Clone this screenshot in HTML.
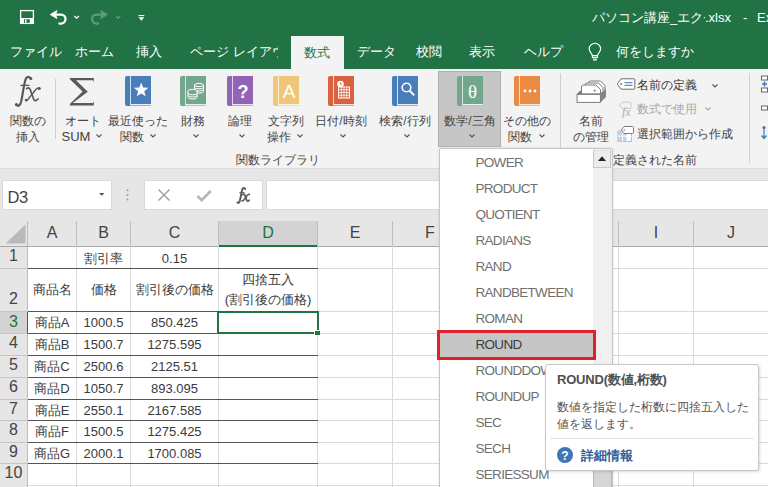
<!DOCTYPE html>
<html><head><meta charset="utf-8">
<style>
*{margin:0;padding:0;box-sizing:border-box}
html,body{width:768px;height:487px;overflow:hidden;background:#fff;font-family:"Liberation Sans",sans-serif;}
.a{position:absolute}
#title{left:0;top:0;width:768px;height:69px;background:#217346}
.tab{position:absolute;top:44px;font-size:13px;color:#fff;line-height:16px;white-space:nowrap}
#ribbon{left:0;top:69px;width:768px;height:100px;background:#f3f3f3;border-bottom:1px solid #dcdcdc}
.rt{position:absolute;width:100px;font-size:12px;color:#444;line-height:16px;white-space:nowrap;text-align:center}
.rl{position:absolute;font-size:12px;color:#444;line-height:16px;white-space:nowrap}
.ch{position:absolute}
#fbar{left:0;top:169px;width:768px;height:52px;background:#e6e6e6}
.hdr{position:absolute;top:221px;height:26px;background:#e6e6e6;border-right:1px solid #bdbdbd;border-bottom:1px solid #a9a9a9;font-size:16px;color:#444;text-align:center;line-height:24px}
.rh{position:absolute;left:0;width:28px;background:#e6e6e6;border-right:1px solid #bdbdbd;border-bottom:1px solid #c6c6c6}
.rn{position:absolute;left:0;width:27px;font-size:16px;color:#444;text-align:center;line-height:18px}
.vl{position:absolute;top:246px;width:1px;height:241px;background:#dadada}
.hl{position:absolute;left:28px;height:1px;width:740px;background:#dadada}
.bl{position:absolute;left:28px;height:1px;width:290px;background:#555}
.c{position:absolute;font-size:13px;color:#3a3a3a;text-align:center;white-space:nowrap;line-height:22px}
.dd{position:absolute;left:475.5px;font-size:13.5px;color:#707070;line-height:16px;letter-spacing:-0.7px}
</style></head><body>
<div id="title" class="a"></div>
<!-- QAT -->
<svg class="a" style="left:0;top:0" width="160" height="36">
  <rect x="20.6" y="10.6" width="12.8" height="12.8" fill="none" stroke="#fff" stroke-width="1.3"/>
  <rect x="20" y="18" width="14" height="6" fill="#fff"/>
  <rect x="24" y="19.3" width="5.7" height="3.6" fill="#217346"/>
  <rect x="25" y="19.6" width="1.5" height="3.3" fill="#fff"/>
  <path d="M50.2 14.6L56.9 10.6L55.6 14.6L56.9 18.6Z" fill="#fff" stroke="#fff" stroke-width=".8" stroke-linejoin="round"/>
  <path d="M55 14.6H61A4.5 4.5 0 0 1 61 23.6H59.4" stroke="#fff" stroke-width="2.3" fill="none" stroke-linecap="round"/>
  <path d="M74.3 16l2.3 2.2 2.3-2.2" stroke="#fff" stroke-width="1.2" fill="none"/>
  <g transform="translate(157.6,0) scale(-1,1)">
  <path d="M50.2 14.6L56.9 10.6L55.6 14.6L56.9 18.6Z" fill="#5f9c7b" stroke="#5f9c7b" stroke-width=".8" stroke-linejoin="round"/>
  <path d="M55 14.6H61A4.5 4.5 0 0 1 61 23.6H59.4" stroke="#5f9c7b" stroke-width="2.3" fill="none" stroke-linecap="round"/>
  </g>
  <path d="M115.8 16l2.3 2.2 2.3-2.2" stroke="#5f9c7b" stroke-width="1.1" fill="none"/>
  <rect x="138.5" y="15" width="5.8" height="1.1" fill="#fff"/>
  <path d="M138.5 17.2h5.8l-2.9 3.6z" fill="#fff"/>
</svg>
<div class="a" style="left:592px;top:10px;width:113px;overflow:hidden;font-size:13px;color:#fff;white-space:nowrap;line-height:16px">パソコン講座_エクセル</div><div class="a" style="left:705px;top:10px;font-size:13px;color:#fff;white-space:nowrap;line-height:16px">.xlsx</div><div class="a" style="left:743px;top:10px;font-size:13px;color:#fff;white-space:nowrap;line-height:16px">-</div><div class="a" style="left:757px;top:10px;font-size:13px;color:#fff;white-space:nowrap;line-height:16px">Excel</div>
<div class="tab" style="left:10px">ファイル</div>
<div class="tab" style="left:75px">ホーム</div>
<div class="tab" style="left:136px">挿入</div>
<div class="tab" style="left:190px;width:88px;overflow:hidden">ページ レイアウト</div>
<div class="a" style="left:291px;top:36px;width:53px;height:34px;background:#f3f3f3"></div>
<div class="tab" style="left:304px;top:45px;color:#217346">数式</div>
<div class="tab" style="left:357px">データ</div>
<div class="tab" style="left:416px">校閲</div>
<div class="tab" style="left:469px">表示</div>
<div class="tab" style="left:524px">ヘルプ</div>
<svg class="a" style="left:586px;top:42px" width="20" height="20"><path d="M6.3 13.6C6.3 11.6 3.2 10.2 3.2 6.9A5.7 5.7 0 0 1 14.6 6.9C14.6 10.2 11.5 11.6 11.5 13.6z" stroke="#fff" stroke-width="1.15" fill="none"/><rect x="6.4" y="13.6" width="5" height="2" fill="none" stroke="#fff" stroke-width="1"/><rect x="7" y="16.6" width="3.8" height="2" fill="#d8e8de"/></svg>
<div class="tab" style="left:616px">何をしますか</div>

<div id="ribbon" class="a"></div>
<!-- fx -->
<svg class="a" style="left:0;top:70px" width="50" height="40">
  <g fill="none" stroke="#595959" stroke-linecap="round">
    <path d="M30.6 8.6C29.6 6.4 27.4 6.2 26 8.4C24.2 11.5 23 23 21.2 31.5C20.2 35.6 18.4 36.8 16.4 34.8" stroke-width="2.2"/>
    <path d="M20.8 15.3H29" stroke-width="1.3"/>
    <path d="M26.6 18.6C28.3 17.2 29.6 18 30.6 20.6L33.4 28.4C34.3 31.2 35.8 31.6 38.2 28.8" stroke-width="1.7"/>
    <path d="M39.6 18.4C38.4 17.6 37.2 18.2 35.6 19.8L28.6 28.6C27.6 30 26.4 30.6 25.6 30" stroke-width="1.5"/>
  </g>
  <g fill="#595959"><circle cx="30.9" cy="8.4" r="1.5"/><circle cx="16.4" cy="34.4" r="1.5"/><circle cx="39.3" cy="18.6" r="1.5"/><circle cx="26.2" cy="30.2" r="1.3"/></g>
</svg>
<div class="rt" style="left:-22px;top:113px">関数の</div>
<div class="rt" style="left:-22px;top:129px">挿入</div>
<div class="a" style="left:55px;top:79px;width:1px;height:60px;background:#cfcfcf"></div>
<!-- sigma -->
<svg class="a" style="left:60px;top:72px" width="40" height="40"><path d="M9.9 5.9H33.8V10.3L33 8.2H16L27.8 19.7L12.8 31H33L33.8 28.7V33.5H9.9V32L22.6 19.6L9.9 7.3Z" fill="#5a5a5a"/></svg>
<div class="rt" style="left:33px;top:113px">オート</div>
<div class="rt" style="left:26px;top:129px;font-size:13px;color:#444">SUM</div>
<svg class="ch" style="left:96px;top:134px" width="6" height="4"><path d="M.5 .5L3 3 5.5 .5" stroke="#555" stroke-width="1.1" fill="none"/></svg>

<!-- books -->
<svg class="a" style="left:125px;top:76px" width="27" height="31">
  <path d="M2 0H26V30H2Q0 30 0 28V2Q0 0 2 0Z" fill="#4a7ebb"/>
  <rect x="5" y="0" width="1" height="28.5" fill="#cfe0f2"/>
  <rect x="5" y="28" width="21" height="1" fill="#e6eef8"/>
  <rect x="5" y="29" width="21" height="1" fill="#8fb2de"/>
  <path d="M16.20 6.60 L18.08 11.62 L23.43 11.85 L19.24 15.19 L20.67 20.35 L16.20 17.39 L11.73 20.35 L13.16 15.19 L8.97 11.85 L14.32 11.62z" fill="#fff"/>
</svg>
<div class="rt" style="left:88px;top:113px">最近使った</div>
<div class="rl" style="left:120px;top:129px">関数</div>
<svg class="ch" style="left:150px;top:134px" width="6" height="4"><path d="M.5 .5L3 3 5.5 .5" stroke="#555" stroke-width="1.1" fill="none"/></svg>

<svg class="a" style="left:180px;top:76px" width="27" height="31">
  <path d="M2 0H26V30H2Q0 30 0 28V2Q0 0 2 0Z" fill="#72a78e"/>
  <rect x="5" y="0" width="1" height="28.5" fill="#d4e6dc"/>
  <rect x="5" y="28" width="21" height="1" fill="#e8f1ec"/>
  <rect x="5" y="29" width="21" height="1" fill="#a9cbb9"/>
  <g fill="none" stroke="#fff" stroke-width="1">
    <ellipse cx="19" cy="9" rx="4.5" ry="1.6"/>
    <path d="M14.5 9v6.5a4.5 1.6 0 0 0 9 0V9 M14.5 11.2a4.5 1.6 0 0 0 9 0 M14.5 13.4a4.5 1.6 0 0 0 9 0"/>
    <ellipse cx="12.5" cy="15" rx="4.5" ry="1.6" fill="#72a78e"/>
    <path d="M8 15v6.5a4.5 1.6 0 0 0 9 0V15 M8 17.2a4.5 1.6 0 0 0 9 0 M8 19.4a4.5 1.6 0 0 0 9 0" fill="#72a78e"/>
  </g>
</svg>
<div class="rt" style="left:143px;top:113px">財務</div>
<svg class="ch" style="left:193px;top:134px" width="6" height="4"><path d="M.5 .5L3 3 5.5 .5" stroke="#555" stroke-width="1.1" fill="none"/></svg>

<svg class="a" style="left:227px;top:76px" width="27" height="31">
  <path d="M2 0H26V30H2Q0 30 0 28V2Q0 0 2 0Z" fill="#9263b6"/>
  <rect x="5" y="0" width="1" height="28.5" fill="#e2d3ee"/>
  <rect x="5" y="28" width="21" height="1" fill="#efe6f6"/>
  <rect x="5" y="29" width="21" height="1" fill="#c0a2d8"/>
  <text x="16" y="21.5" font-family="Liberation Sans" font-weight="bold" font-size="18" fill="#fff" text-anchor="middle">?</text>
</svg>
<div class="rt" style="left:190px;top:113px">論理</div>
<svg class="ch" style="left:239px;top:134px" width="6" height="4"><path d="M.5 .5L3 3 5.5 .5" stroke="#555" stroke-width="1.1" fill="none"/></svg>

<svg class="a" style="left:273px;top:76px" width="27" height="31">
  <path d="M2 0H26V30H2Q0 30 0 28V2Q0 0 2 0Z" fill="#efc77b"/>
  <rect x="5" y="0" width="1" height="28.5" fill="#fbeed5"/>
  <rect x="5" y="28" width="21" height="1" fill="#fcf3e2"/>
  <rect x="5" y="29" width="21" height="1" fill="#f5dba9"/>
  <text x="16" y="22" font-family="Liberation Sans" font-size="19" fill="#fff" text-anchor="middle">A</text>
</svg>
<div class="rt" style="left:236px;top:113px">文字列</div>
<div class="rl" style="left:267px;top:129px">操作</div>
<svg class="ch" style="left:297px;top:134px" width="6" height="4"><path d="M.5 .5L3 3 5.5 .5" stroke="#555" stroke-width="1.1" fill="none"/></svg>

<svg class="a" style="left:328px;top:76px" width="27" height="31">
  <path d="M2 0H26V30H2Q0 30 0 28V2Q0 0 2 0Z" fill="#d9613f"/>
  <rect x="5" y="0" width="1" height="28.5" fill="#f4d2c7"/>
  <rect x="5" y="28" width="21" height="1" fill="#f8e4dd"/>
  <rect x="5" y="29" width="21" height="1" fill="#eaa28d"/>
  <rect x="10.5" y="11" width="11" height="11" fill="none" stroke="#fff" stroke-width="1"/>
  <path d="M13.25 11v11 M16 11v11 M18.75 11v11 M10.5 13.75h11 M10.5 16.5h11 M10.5 19.25h11" stroke="#fff" stroke-width=".8"/>
  <circle cx="12.5" cy="8" r="3.3" fill="#fff"/>
  <path d="M12.5 6v2.2h1.6" stroke="#d9613f" stroke-width=".8" fill="none"/>
</svg>
<div class="rt" style="left:291px;top:113px">日付/時刻</div>
<svg class="ch" style="left:340px;top:134px" width="6" height="4"><path d="M.5 .5L3 3 5.5 .5" stroke="#555" stroke-width="1.1" fill="none"/></svg>

<svg class="a" style="left:392px;top:76px" width="27" height="31">
  <path d="M2 0H26V30H2Q0 30 0 28V2Q0 0 2 0Z" fill="#4a7ebb"/>
  <rect x="5" y="0" width="1" height="28.5" fill="#cfe0f2"/>
  <rect x="5" y="28" width="21" height="1" fill="#e6eef8"/>
  <rect x="5" y="29" width="21" height="1" fill="#8fb2de"/>
  <circle cx="14.5" cy="11.5" r="4.3" fill="none" stroke="#fff" stroke-width="1.6"/>
  <path d="M17.6 14.6l4.6 4.6" stroke="#fff" stroke-width="2"/>
</svg>
<div class="rt" style="left:355px;top:113px">検索/行列</div>
<svg class="ch" style="left:404px;top:134px" width="6" height="4"><path d="M.5 .5L3 3 5.5 .5" stroke="#555" stroke-width="1.1" fill="none"/></svg>

<div class="a" style="left:438px;top:71px;width:63px;height:76px;background:#c6c6c6;border:1px solid #b1b1b1"></div>
<svg class="a" style="left:457px;top:76px" width="27" height="31">
  <path d="M2 0H26V30H2Q0 30 0 28V2Q0 0 2 0Z" fill="#72a78e"/>
  <rect x="5" y="0" width="1" height="28.5" fill="#d4e6dc"/>
  <rect x="5" y="28" width="21" height="1" fill="#e8f1ec"/>
  <rect x="5" y="29" width="21" height="1" fill="#a9cbb9"/>
  <text x="15.5" y="21.5" font-family="Liberation Serif" font-size="19" fill="#fff" text-anchor="middle">θ</text>
</svg>
<div class="rt" style="left:420px;top:113px">数学/三角</div>
<svg class="ch" style="left:469px;top:134px" width="6" height="4"><path d="M.5 .5L3 3 5.5 .5" stroke="#555" stroke-width="1.1" fill="none"/></svg>

<svg class="a" style="left:514px;top:76px" width="27" height="31">
  <path d="M2 0H26V30H2Q0 30 0 28V2Q0 0 2 0Z" fill="#e98b43"/>
  <rect x="5" y="0" width="1" height="28.5" fill="#f9dcc5"/>
  <rect x="5" y="28" width="21" height="1" fill="#fbe9db"/>
  <rect x="5" y="29" width="21" height="1" fill="#f2b88d"/>
  <circle cx="11" cy="15" r="1.4" fill="#fff"/><circle cx="16" cy="15" r="1.4" fill="#fff"/><circle cx="21" cy="15" r="1.4" fill="#fff"/>
</svg>
<div class="rt" style="left:477px;top:113px">その他の</div>
<div class="rl" style="left:508px;top:129px">関数</div>
<svg class="ch" style="left:539px;top:134px" width="6" height="4"><path d="M.5 .5L3 3 5.5 .5" stroke="#555" stroke-width="1.1" fill="none"/></svg>

<div class="rt" style="left:228px;top:152px">関数ライブラリ</div>
<div class="a" style="left:560px;top:73px;width:1px;height:90px;background:#cfcfcf"></div>
<!-- name mgr -->
<svg class="a" style="left:572px;top:76px" width="40" height="30">
  <g stroke="#7a7a7a" stroke-width="1" fill="#fff">
    <path d="M16.5 16V7a2 2 0 0 1 2-2h10l4.5 4.5V16z"/>
    <path d="M13 17V9a2 2 0 0 1 2-2h11.5l4.5 4.5V17z"/>
    <path d="M9.5 17.9V11a2 2 0 0 1 2-2H24l4.5 4.5v4.4z"/>
  </g>
  <circle cx="22.6" cy="14.7" r="1.1" fill="#8a8a8a"/>
  <path d="M28.4 17.9L34 12.5V21L28.4 26.5z" fill="#858585"/>
  <path d="M5 17.9L8.8 14.2V17.9z" fill="#6a6a6a"/>
  <rect x="5.1" y="18.4" width="23.3" height="8" fill="#fff" stroke="#7a7a7a" stroke-width="1"/>
</svg>
<div class="rt" style="left:541px;top:113px">名前</div>
<div class="rt" style="left:541px;top:129px">の管理</div>
<svg class="a" style="left:616px;top:78px" width="20" height="13">
  <path d="M5 .8H17.8a1 1 0 0 1 1 1V10.2a1 1 0 0 1-1 1H5L1.3 6z" fill="#fff" stroke="#6e6e6e" stroke-width="1"/>
  <circle cx="5.2" cy="6" r="1" fill="#777"/>
  <path d="M8.5 4.6h8 M8.5 7.4h8" stroke="#5b8fcf" stroke-width="1.1"/>
</svg>
<div class="rl" style="left:637px;top:77px;color:#333">名前の定義</div>
<svg class="ch" style="left:712px;top:84px" width="6" height="4"><path d="M.5 .5L3 3 5.5 .5" stroke="#555" stroke-width="1.1" fill="none"/></svg>
<svg class="a" style="left:618px;top:101px" width="16" height="17">
  <path d="M4.5 1.2h7.5a1 1 0 0 1 1 1V6.5a1 1 0 0 1-1 1H4.5L1.5 4.3z" fill="none" stroke="#c9c9c9" stroke-width="1"/>
  <text x="4" y="14.5" font-family="Liberation Serif" font-style="italic" font-size="12" fill="#b0b0b0">fx</text>
</svg>
<div class="rl" style="left:637px;top:101px;color:#a9a9a9">数式で使用</div>
<svg class="ch" style="left:705px;top:107px" width="6" height="4"><path d="M.5 .5L3 3 5.5 .5" stroke="#aaa" stroke-width="1.1" fill="none"/></svg>
<svg class="a" style="left:617px;top:125px" width="18" height="18">
  <rect x="1" y="6" width="13.5" height="10.5" fill="#fff" stroke="#aaa" stroke-width=".8"/>
  <rect x="1" y="6" width="9" height="10.5" fill="#bcd3ea"/>
  <path d="M1 11.2h13.5 M5.5 6v10.5 M10 6v10.5" stroke="#fff" stroke-width="1"/>
  <path d="M7 1.5h8.5a1 1 0 0 1 1 1V7.5a1 1 0 0 1-1 1H7L4.3 5z" fill="#fff" stroke="#6e6e6e" stroke-width=".9"/>
  <circle cx="7.2" cy="5" r=".8" fill="#777"/>
</svg>
<div class="rl" style="left:637px;top:126px">選択範囲から作成</div>
<div class="rl" style="left:613px;top:152px">定義された名前</div>
<div class="a" style="left:749px;top:73px;width:1px;height:90px;background:#cfcfcf"></div>
<svg class="a" style="left:758px;top:72px" width="10" height="72">
  <rect x="3.5" y="4" width="6" height="4" fill="#fff" stroke="#666" stroke-width="1"/>
  <path d="M6.5 9.5v5 M4 12h5" stroke="#3a78c0" stroke-width="1.4"/>
  <rect x="3.5" y="16" width="6" height="4" fill="#fff" stroke="#666" stroke-width="1"/>
  <rect x="3.5" y="34" width="6" height="4" fill="#fff" stroke="#666" stroke-width="1"/>
  <circle cx="6" cy="55.5" r="1.6" fill="#3a78c0"/>
  <path d="M6 56v10 M3.5 63.5l2.5 3 2.5-3" stroke="#3a78c0" stroke-width="1.2" fill="none"/>
</svg>

<!-- formula bar -->
<div id="fbar" class="a"></div>
<div class="a" style="left:2px;top:180px;width:110px;height:30px;background:#fff;border:1px solid #d9d9d9"></div>
<div class="a" style="left:7.5px;top:187px;font-size:16.5px;color:#444;line-height:20px;letter-spacing:-0.5px">D3</div>
<svg class="a" style="left:99px;top:193px" width="6" height="3"><path d="M0 0h5.5l-2.75 2.7z" fill="#555"/></svg>
<svg class="a" style="left:126px;top:188px" width="3" height="14"><circle cx="1.5" cy="2.2" r="1" fill="#9a9a9a"/><circle cx="1.5" cy="7" r="1" fill="#9a9a9a"/><circle cx="1.5" cy="11.6" r="1" fill="#9a9a9a"/></svg>
<div class="a" style="left:144px;top:180px;width:119px;height:30px;background:#fff;border:1px solid #d9d9d9"></div>
<svg class="a" style="left:156px;top:187px" width="60" height="17">
  <path d="M2.5 2.5l11 11 M13.5 2.5l-11 11" stroke="#a3a3a3" stroke-width="1.5"/>
  <path d="M41.5 9l4.2 4.2 9-9.2" stroke="#b5b5b5" stroke-width="2.6" fill="none"/>
</svg>
<svg class="a" style="left:230px;top:184px" width="24" height="22">
  <g fill="none" stroke="#5e5e5e" stroke-linecap="round">
    <path d="M15.2 5C14.6 3.6 13.3 3.6 12.6 4.8C11.6 6.8 10.9 12.5 9.9 16.6C9.4 18.6 8.4 19.3 7.4 18.4" stroke-width="2"/>
    <path d="M9.8 8.6H14.2" stroke-width="1"/>
    <path d="M12.8 10.5C13.8 9.8 14.6 10.2 15.1 11.6L16.6 16C17.1 17.5 18 17.7 19.2 16.2" stroke-width="1.8"/>
    <path d="M19.6 10.4C19 10 18.3 10.3 17.4 11.2L13.6 16.2C13 17 12.4 17.2 12 16.9" stroke-width="1.5"/>
  </g>
</svg>
<div class="a" style="left:266px;top:180px;width:502px;height:30px;background:#fff;border:1px solid #d9d9d9;border-right:0"></div>

<!-- grid headers -->
<div class="hdr" style="left:0;width:28px"></div>
<svg class="a" style="left:5px;top:224px" width="21" height="20"><path d="M.5 19.5H20.5V.5z" fill="#b9b9b9"/></svg>
<div class="hdr" style="left:28px;width:49px;">A</div>
<div class="hdr" style="left:77px;width:54px;">B</div>
<div class="hdr" style="left:131px;width:88px;">C</div>
<div class="hdr" style="left:219px;width:99px;background:#d3d3d3;color:#217346;border-bottom:2px solid #217346;">D</div>
<div class="hdr" style="left:318px;width:75px;">E</div>
<div class="hdr" style="left:393px;width:75px;">F</div>
<div class="hdr" style="left:468px;width:75px;">G</div>
<div class="hdr" style="left:543px;width:76px;">H</div>
<div class="hdr" style="left:619px;width:75px;">I</div>
<div class="hdr" style="left:694px;width:75px;">J</div>
<!-- row headers -->
<div class="rh" style="top:247px;height:22px;"></div>
<div class="rh" style="top:269px;height:43px;"></div>
<div class="rh" style="top:312px;height:22px;background:#d3d3d3;border-right:1px solid #217346;"></div>
<div class="rh" style="top:334px;height:22px;"></div>
<div class="rh" style="top:356px;height:22px;"></div>
<div class="rh" style="top:378px;height:22px;"></div>
<div class="rh" style="top:400px;height:21px;"></div>
<div class="rh" style="top:421px;height:22px;"></div>
<div class="rh" style="top:443px;height:21px;"></div>
<div class="rh" style="top:464px;height:30px;"></div>
<div class="rn" style="top:247.1px;">1</div>
<div class="rn" style="top:290.3px;">2</div>
<div class="rn" style="top:312.5px;color:#217346;">3</div>
<div class="rn" style="top:334.3px;">4</div>
<div class="rn" style="top:356.1px;">5</div>
<div class="rn" style="top:378.0px;">6</div>
<div class="rn" style="top:399.8px;">7</div>
<div class="rn" style="top:421.4px;">8</div>
<div class="rn" style="top:442.9px;">9</div>
<div class="rn" style="top:464.4px;">10</div>
<!-- gridlines -->
<div class="vl" style="left:76px"></div>
<div class="vl" style="left:130px"></div>
<div class="vl" style="left:218px"></div>
<div class="vl" style="left:317px"></div>
<div class="vl" style="left:392px"></div>
<div class="vl" style="left:467px"></div>
<div class="vl" style="left:542px"></div>
<div class="vl" style="left:618px"></div>
<div class="vl" style="left:693px"></div>
<div class="hl" style="top:268px"></div>
<div class="hl" style="top:311px"></div>
<div class="hl" style="top:333px"></div>
<div class="hl" style="top:355px"></div>
<div class="hl" style="top:377px"></div>
<div class="hl" style="top:399px"></div>
<div class="hl" style="top:420px"></div>
<div class="hl" style="top:442px"></div>
<div class="hl" style="top:463px"></div>
<div class="hl" style="top:485px"></div>
<!-- borders -->
<div class="bl" style="top:268px"></div>
<div class="bl" style="top:311px"></div>
<div class="bl" style="top:333px"></div>
<div class="bl" style="top:355px"></div>
<div class="bl" style="top:377px"></div>
<div class="bl" style="top:399px"></div>
<div class="bl" style="top:420px"></div>
<div class="bl" style="top:442px"></div>
<div class="bl" style="top:463px"></div>
<!-- cells -->
<div class="c" style="left:77px;top:248px;width:53px">割引率</div>
<div class="c" style="left:131px;top:248px;width:87px">0.15</div>
<div class="c" style="left:219px;top:270px;width:98px;line-height:20px">四捨五入<br>(割引後の価格)</div>
<div class="c" style="left:28px;top:279px;width:48px">商品名</div>
<div class="c" style="left:77px;top:279px;width:53px">価格</div>
<div class="c" style="left:131px;top:279px;width:87px">割引後の価格</div>
<div class="c" style="left:28px;top:312px;width:48px">商品A</div>
<div class="c" style="left:77px;top:312px;width:53px">1000.5</div>
<div class="c" style="left:131px;top:312px;width:87px">850.425</div>
<div class="c" style="left:28px;top:334px;width:48px">商品B</div>
<div class="c" style="left:77px;top:334px;width:53px">1500.7</div>
<div class="c" style="left:131px;top:334px;width:87px">1275.595</div>
<div class="c" style="left:28px;top:356px;width:48px">商品C</div>
<div class="c" style="left:77px;top:356px;width:53px">2500.6</div>
<div class="c" style="left:131px;top:356px;width:87px">2125.51</div>
<div class="c" style="left:28px;top:378px;width:48px">商品D</div>
<div class="c" style="left:77px;top:378px;width:53px">1050.7</div>
<div class="c" style="left:131px;top:378px;width:87px">893.095</div>
<div class="c" style="left:28px;top:400px;width:48px">商品E</div>
<div class="c" style="left:77px;top:400px;width:53px">2550.1</div>
<div class="c" style="left:131px;top:400px;width:87px">2167.585</div>
<div class="c" style="left:28px;top:421px;width:48px">商品F</div>
<div class="c" style="left:77px;top:421px;width:53px">1500.5</div>
<div class="c" style="left:131px;top:421px;width:87px">1275.425</div>
<div class="c" style="left:28px;top:443px;width:48px">商品G</div>
<div class="c" style="left:77px;top:443px;width:53px">2000.1</div>
<div class="c" style="left:131px;top:443px;width:87px">1700.085</div>

<!-- selection -->
<div class="a" style="left:217px;top:311px;width:102px;height:23px;border:2px solid #217346"></div>
<div class="a" style="left:314px;top:330px;width:6px;height:5px;background:#217346;border-left:1px solid #fff;border-top:1px solid #fff"></div>

<!-- dropdown -->
<div class="a" style="left:439px;top:148px;width:174px;height:345px;background:#fff;border:1px solid #c6c6c6;border-radius:2px 2px 0 0;box-shadow:0 0 2px rgba(0,0,0,.16)"></div>
<div class="a" style="left:593px;top:149px;width:19px;height:338px;background:#f0f0f0"></div>
<div class="a" style="left:593px;top:150px;width:18px;height:18px;background:#ececec;border:1px solid #c9c9c9;border-top-color:#e0e0e0"></div>
<svg class="a" style="left:596px;top:154px" width="12" height="10"><path d="M2 7h8l-4-4.8z" fill="#222"/></svg>
<div class="a" style="left:593px;top:470px;width:19px;height:20px;background:#d6d6d6;border-left:1px solid #b8b8b8;border-right:1px solid #b8b8b8;border-top:1px solid #c8c8c8"></div>
<div class="dd" style="top:155px">POWER</div>
<div class="dd" style="top:181px">PRODUCT</div>
<div class="dd" style="top:207px">QUOTIENT</div>
<div class="dd" style="top:233px">RADIANS</div>
<div class="dd" style="top:259px">RAND</div>
<div class="dd" style="top:285px">RANDBETWEEN</div>
<div class="dd" style="top:311px">ROMAN</div>
<div class="a" style="left:437px;top:330px;width:159px;height:30px;background:#c6c6c6;border:3px solid #e0202b"></div>
<div class="dd" style="top:337px;color:#3c3c3c">ROUND</div>
<div class="dd" style="top:363px">ROUNDDOWN</div>
<div class="dd" style="top:389px">ROUNDUP</div>
<div class="dd" style="top:415px">SEC</div>
<div class="dd" style="top:441px">SECH</div>
<div class="dd" style="top:467px">SERIESSUM</div>

<!-- tooltip -->
<div class="a" style="left:545px;top:364px;width:214px;height:107px;background:#fff;border:1px solid #c8c8c8;border-radius:3px;box-shadow:1px 1px 3px rgba(0,0,0,.15)"></div>
<div class="a" style="left:557px;top:372px;font-size:13px;font-weight:bold;color:#505050;line-height:16px;white-space:nowrap;letter-spacing:-0.2px">ROUND(数値,桁数)</div>
<div class="a" style="left:557px;top:399px;font-size:12px;color:#555;line-height:17px;white-space:nowrap">数値を指定した桁数に四捨五入した<br>値を返します。</div>
<div class="a" style="left:550px;top:438px;width:204px;height:1px;background:#e1e1e1"></div>
<svg class="a" style="left:557px;top:447px" width="17" height="17"><circle cx="8" cy="8" r="8" fill="#3f77b5"/><text x="8" y="13" font-size="12" font-weight="bold" fill="#fff" text-anchor="middle" font-family="Liberation Sans">?</text></svg>
<div class="a" style="left:581px;top:448px;font-size:12.5px;font-weight:bold;color:#2f609e;line-height:16px;white-space:nowrap">詳細情報</div>
</body></html>
